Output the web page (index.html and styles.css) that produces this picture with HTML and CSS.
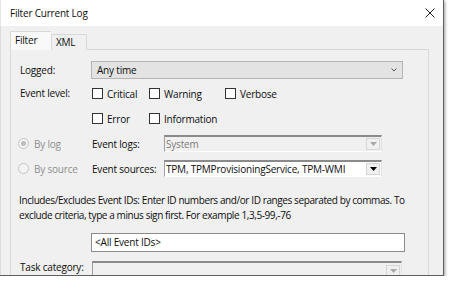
FILE: index.html
```html
<!DOCTYPE html>
<html>
<head>
<title>Filter Current Log</title>
<link rel="stylesheet" href="styles.css">
</head>
<body>
<div class="window">
  <div class="titlebar">
    <span class="title">Filter Current Log</span>
    <svg class="close" viewBox="0 0 10 10" width="10" height="10"><path d="M0.5 0.5 L9.5 9.5 M9.5 0.5 L0.5 9.5" stroke="#222" stroke-width="1" fill="none"/></svg>
  </div>
  <div class="client">
    <div class="tabs">
      <div class="tab tab-active">Filter</div>
      <div class="tab">XML</div>
    </div>
    <div class="panel">
      <!-- logged -->
      <div class="row row-logged">
        <span class="lbl">Logged:</span>
        <div class="select">
          <span>Any time</span>
          <svg class="chev" viewBox="0 0 6 4" width="6" height="4"><path d="M0.5 0.5 L3 3 L5.5 0.5" stroke="#555" fill="none"/></svg>
        </div>
      </div>
      <!-- event level -->
      <div class="row row-level">
        <span class="lbl">Event level:</span>
        <div class="checks">
          <label class="chk"><span class="box"></span>Critical</label>
          <label class="chk"><span class="box"></span>Warning</label>
          <label class="chk"><span class="box"></span>Verbose</label>
          <label class="chk"><span class="box"></span>Error</label>
          <label class="chk"><span class="box"></span>Information</label>
        </div>
      </div>
      <!-- by log / by source -->
      <div class="row row-src">
        <label class="radio radio-on"><span class="dot"></span>By log</label>
        <span class="lbl2">Event logs:</span>
        <div class="combo combo-off">
          <span class="combo-text">System</span>
          <span class="drop"><svg viewBox="0 0 7 4" width="7" height="4"><path d="M0 0 L7 0 L3.5 4 Z" fill="#a8a8a8"/></svg></span>
        </div>
      </div>
      <div class="row row-src row-src2">
        <label class="radio"><span class="dot"></span>By source</label>
        <span class="lbl2">Event sources:</span>
        <div class="combo">
          <span class="combo-text">TPM, TPMProvisioningService, TPM-WMI</span>
          <span class="drop"><svg viewBox="0 0 7 4" width="7" height="4"><path d="M0 0 L7 0 L3.5 4 Z" fill="#000"/></svg></span>
        </div>
      </div>
      <p class="note">Includes/Excludes Event IDs: Enter ID numbers and/or ID ranges separated by commas. To<br>exclude criteria, type a minus sign first. For example 1,3,5-99,-76</p>
      <div class="row row-ids">
        <div class="textbox">&lt;All Event IDs&gt;</div>
      </div>
      <div class="row row-task">
        <span class="lbl">Task category:</span>
        <div class="combo combo-off combo-wide">
          <span class="combo-text"></span>
          <span class="drop"><svg viewBox="0 0 7 4" width="7" height="4"><path d="M0 0 L7 0 L3.5 4 Z" fill="#a8a8a8"/></svg></span>
        </div>
      </div>
    </div>
  </div>
</div>
</body>
</html>
```

FILE: styles.css
```css
html,body{margin:0;padding:0;background:#fff;}
body{font-family:"Open Sans","Noto Sans",sans-serif;font-size:10px;letter-spacing:-0.2px;color:#0d0d0d;}

.window{width:444px;height:276px;box-sizing:border-box;border-right:1px solid #5f5f5f;border-bottom:1px solid #5f5f5f;box-shadow:1px 1px 3px rgba(0,0,0,.4);background:#f0f0f0;overflow:hidden;display:flex;flex-direction:column;}
.titlebar{flex:none;height:26px;background:#fff;display:flex;align-items:center;justify-content:space-between;padding:0 8px 0 9px;border-left:1px solid #e6e6e6;}
.title{font-size:10px;}
.close{display:block;}

.client{flex:1;padding:5px 14px 0 9px;border-left:1px solid #dcdcdc;min-height:0;}
.tabs{display:flex;align-items:flex-end;margin-bottom:-1px;position:relative;z-index:1;}
.tab{height:15px;line-height:15px;width:30px;padding-left:4px;border:1px solid #d9d9d9;border-bottom:none;background:#f0f0f0;}
.tab-active{height:18px;line-height:17px;width:36px;padding-left:4px;background:#f9f9f9;border-right:none;}
.panel{border:1px solid #d9d9d9;background:#f0f0f0;height:242px;box-sizing:border-box;padding:11px 0 0 7px;}

.row{display:flex;align-items:center;}
.lbl{width:71px;margin-left:2px;flex:none;}
.lbl2{width:72px;flex:none;}

.select{width:312px;height:18px;box-sizing:border-box;border:1px solid #b4b4b4;background:#e3e3e3;display:flex;align-items:center;justify-content:space-between;padding:0 5px 0 5px;}
.chev{display:block;}

.row-level{align-items:flex-start;margin-top:8px;}
.row-level .lbl{line-height:13px;}
.checks{display:grid;grid-template-columns:57px 76px 80px;row-gap:12px;margin-left:1px;}
.chk{display:flex;align-items:center;height:13px;}
.box{width:11px;height:11px;box-sizing:border-box;border:1px solid #333;background:#fff;margin-right:4px;}

.row-src{margin-top:10px;height:17px;}
.row-src2{margin-top:8px;}
.radio{width:74px;flex:none;display:flex;align-items:center;color:#8f8f8f;}
.dot{width:11px;height:11px;box-sizing:border-box;border:1px solid #c4c4c4;border-radius:50%;background:#f4f4f4;margin-right:5px;position:relative;}
.radio-on .dot::after{content:"";position:absolute;left:2px;top:2px;width:5px;height:5px;border-radius:50%;background:#bdbdbd;}

.combo{width:218px;height:17px;box-sizing:border-box;border-top:2px solid #8a8a8a;border-left:1px solid #a0a0a0;border-right:1px solid #e3e3e3;border-bottom:1px solid #fff;background:#fff;display:flex;align-items:center;justify-content:space-between;padding-left:1px;}
.combo-off{background:#f0f0f0;color:#7a7a7a;}
.combo-text{white-space:nowrap;overflow:hidden;}
.drop{width:14px;height:12px;box-sizing:border-box;border:1px solid #d6d6d6;background:#f0f0f0;margin-right:1px;display:flex;align-items:center;justify-content:center;flex:none;}
.drop svg{display:block;}

.note{margin:16px 0 0 1px;line-height:15px;white-space:nowrap;letter-spacing:-0.4px;}
.row-ids{margin-top:10px;padding-left:73px;}
.textbox{width:314px;height:19px;box-sizing:border-box;border:1px solid #8c8c8c;background:#fff;line-height:17px;padding-left:3px;}

.row-task{margin-top:9px;align-items:flex-start;}
.row-task .lbl{margin-top:-1px;}
.combo-wide{width:310px;height:20px;margin-left:1px;}
.combo-wide .drop{align-self:flex-start;margin-top:2px;}
```
